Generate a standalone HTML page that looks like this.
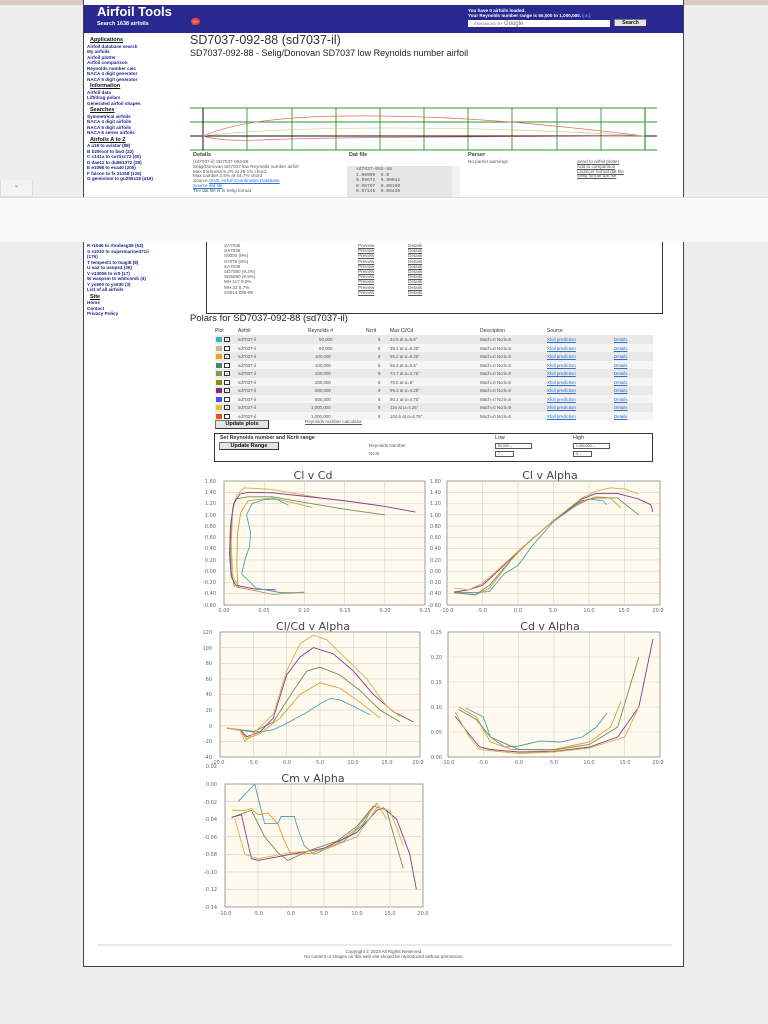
<!DOCTYPE html>
<html><head><meta charset="utf-8">
<style>
*{margin:0;padding:0;box-sizing:border-box}
body{width:768px;height:1024px;background:#eeeeee;position:relative;overflow:hidden;font-family:"Liberation Sans",sans-serif;color:#333}
.a{position:absolute;white-space:nowrap}
#page{position:absolute;left:83px;top:0;width:601px;height:967px;background:#fff;border:1px solid #444;border-top:none}
.nav{position:absolute;left:87px;font-size:4.6px;font-weight:bold;color:#22228a;line-height:5.5px}
.nh{font-size:5.5px;color:#111;text-decoration:underline;font-weight:bold;margin-left:3px}
.lk{color:#2a6fd6;text-decoration:underline}
.sm{font-size:4.6px;color:#555;line-height:4.8px}
.row{position:absolute;left:215px;width:438px;height:8.5px;font-size:4.4px;color:#555}
.row span{position:absolute;top:2px}
.sw{position:absolute;left:1px;top:2px;width:6px;height:5px}
.cb{position:absolute;left:9px;top:2px;width:6px;height:5px;border:0.7px solid #333;background:#fff;font-size:4px;line-height:4px;text-align:center}
.btn{position:absolute;background:#e4e4e4;border:1px solid #777;border-right-color:#333;border-bottom-color:#333;font-size:5.5px;font-weight:bold;color:#111;text-align:center}
.t{font-family:"DejaVu Sans",sans-serif}
</style></head><body>
<div class="a" style="left:0;top:0;width:768px;height:5px;background:#dcc6c6"></div>
<div class="a" style="left:270px;top:-1px;font-size:5px;color:#444">This site uses cookies. See the <span style="color:#22a">privacy policy</span> for more information.</div>
<div id="page"></div>
<div class="a" style="left:84px;top:5px;width:599px;height:28px;background:#282890"></div>
<div class="a" style="left:97px;top:4px;font-size:13px;font-weight:bold;color:#fff">Airfoil Tools</div>
<div class="a" style="left:97px;top:21px;font-size:5.5px;font-weight:bold;color:#fff">Search 1638 airfoils</div>
<div class="a" style="left:191px;top:18px;width:9px;height:7px;border-radius:4px;background:#e0443a;font-size:4px;color:#fff;text-align:center;line-height:7px">G+</div>
<div class="a" style="left:468px;top:8px;font-size:4.6px;font-weight:bold;color:#fff;line-height:5px">You have 0 airfoils loaded.<br>Your Reynolds number range is 50,000 to 1,000,000. <span style="color:#7af">( x )</span></div>
<div class="a" style="left:468px;top:20px;width:142px;height:7px;background:#fff;font-size:4px;color:#777;padding-left:6px;line-height:7px">ENHANCED BY <span style="font-size:6px">Google</span></div>
<div class="btn" style="left:614px;top:19px;width:33px;height:8px;line-height:6px;font-size:5px">Search</div>

<div class="a" style="left:190px;top:33px;font-size:12.5px;color:#333">SD7037-092-88 (sd7037-il)</div>
<div class="a" style="left:190px;top:48px;font-size:9px;color:#222">SD7037-092-88 - Selig/Donovan SD7037 low Reynolds number airfoil</div>

<div class="nav" style="top:38px"><div class="nh">Applications</div>Airfoil database search<br>My airfoils<br>Airfoil plotter<br>Airfoil comparison<br>Reynolds number calc<br>NACA 4 digit generator<br>NACA 5 digit generator
<div class="nh" style="margin-top:2px">Information</div>Airfoil data<br>Lift/drag polars<br>Generated airfoil shapes
<div class="nh" style="margin-top:2px">Searches</div>Symmetrical airfoils<br>NACA 4 digit airfoils<br>NACA 5 digit airfoils<br>NACA 6 series airfoils
<div class="nh" style="margin-top:2px">Airfoils A to Z</div>A a18 to avistar (88)<br>B b29root to bw3 (22)<br>C c141a to curtisc72 (40)<br>D dae11 to du861372 (28)<br>E e1098 to esa40 (205)<br>F falcon to fx 21158 (126)<br>G geminism to gu255118 (419)</div>
<div class="nav" style="top:243px">R r1046 to rhodesg36 (53)<br>S s1010 to supermarine371ii<br>(176)<br>T tempest1 to tsagi8 (8)<br>U ua2 to usnps4 (36)<br>V v13006 to vr9 (17)<br>W waspsm to whitcomb (4)<br>Y ys900 to ys930 (3)<br>List of all airfoils
<div class="nh" style="margin-top:2px">Site</div>Home<br>Contact<br>Privacy Policy</div>

<!-- details -->
<div class="a" style="left:193px;top:152px;font-size:5.5px;font-weight:bold;color:#444">Details</div>
<div class="a" style="left:349px;top:152px;font-size:5.5px;font-weight:bold;color:#444">Dat file</div>
<div class="a" style="left:468px;top:152px;font-size:5.5px;font-weight:bold;color:#444">Parser</div>
<div class="a sm" style="left:193px;top:160px">(sd7037-il) SD7037-092-88<br>Selig/Donovan SD7037 low Reynolds number airfoil<br>Max thickness 9.2% at 26.1% chord.<br>Max camber 2.5% at 44.7% chord<br>Source <span class="lk">UIUC Airfoil Coordinates Database</span><br><span class="lk">Source dat file</span><br>The dat file is in Selig format</div>
<div class="a" style="left:347px;top:166px;width:113px;height:31px;background:#e6e6e6"></div>
<div class="a" style="left:452px;top:166px;width:8px;height:31px;background:#f2f2f2"></div>
<div class="a sm" style="left:356px;top:167px;font-family:'Liberation Mono',monospace;line-height:5.6px">sd7037-092-88<br>1.00000&nbsp; 0.0<br>0.99672&nbsp; 0.00042<br>0.98707&nbsp; 0.00180<br>0.97146&nbsp; 0.00436</div>
<div class="a sm" style="left:468px;top:160px">No parser warnings</div>
<div class="a sm lk" style="left:577px;top:160px">Send to airfoil plotter<br>Add to comparison<br>Lednicer format dat file<br>Selig format dat file</div>

<!-- strip -->
<div class="a" style="left:0;top:197px;width:768px;height:45px;background:#fafafa;border-top:1px solid #ddd"></div>
<div class="a" style="left:0;top:180px;width:33px;height:17px;background:#f4f4f4;border:1px solid #ddd;border-top:none;font-size:7px;color:#777;text-align:center;line-height:12px">⌄</div>

<!-- related box -->
<div class="a" style="left:206px;top:242px;width:457px;height:72px;border:1px solid #333;border-top:none"></div>
<div class="a sm" style="left:224px;top:243px;line-height:5.2px">SA7035<br>SA7036<br>S9000 (9%)<br>S7075 (9%)<br>SA7038<br>SD7080 (9.2%)<br>SD5060 (9.5%)<br>MH 117 9.8%<br>MH 32 8.7%<br>S3014-095-85</div>
<div class="a sm lk" style="left:358px;top:243px;line-height:5.2px">Preview<br>Preview<br>Preview<br>Preview<br>Preview<br>Preview<br>Preview<br>Preview<br>Preview<br>Preview</div>
<div class="a sm lk" style="left:408px;top:243px;line-height:5.2px">Details<br>Details<br>Details<br>Details<br>Details<br>Details<br>Details<br>Details<br>Details<br>Details</div>

<div class="a" style="left:190px;top:313px;font-size:9.5px;color:#222">Polars for SD7037-092-88 (sd7037-il)</div>
<div class="a" style="left:215px;top:328px;font-size:5px;color:#333;width:440px;height:7px">
<span class="a" style="left:0">Plot</span><span class="a" style="left:23px">Airfoil</span><span class="a" style="left:93px">Reynolds #</span><span class="a" style="left:151px">Ncrit</span><span class="a" style="left:175px">Max Cl/Cd</span><span class="a" style="left:265px">Description</span><span class="a" style="left:332px">Source</span></div>

<div class="row" style="top:335px;background:#e9e9e9"><i class="sw" style="background:#38b0c8"></i><i class="cb">✓</i><span style="left:23px">sd7037-il</span><span style="left:104px">50,000</span><span style="left:163px">9</span><span style="left:175px">34.5 at α=6.5°</span><span style="left:265px">Mach=0 Ncrit=9</span><span class="lk" style="left:332px">Xfoil prediction</span><span class="lk" style="left:399px">Details</span></div>
<div class="row" style="top:343.5px;background:#f5f5f5"><i class="sw" style="background:#c8b890"></i><i class="cb"></i><span style="left:23px">sd7037-il</span><span style="left:104px">50,000</span><span style="left:163px">5</span><span style="left:175px">39.1 at α=6.25°</span><span style="left:265px">Mach=0 Ncrit=5</span><span class="lk" style="left:332px">Xfoil prediction</span><span class="lk" style="left:399px">Details</span></div>
<div class="row" style="top:352px;background:#e9e9e9"><i class="sw" style="background:#f0a020"></i><i class="cb">✓</i><span style="left:23px">sd7037-il</span><span style="left:100px">100,000</span><span style="left:163px">9</span><span style="left:175px">55.2 at α=5.25°</span><span style="left:265px">Mach=0 Ncrit=9</span><span class="lk" style="left:332px">Xfoil prediction</span><span class="lk" style="left:399px">Details</span></div>
<div class="row" style="top:360.5px;background:#f5f5f5"><i class="sw" style="background:#3f8a70"></i><i class="cb"></i><span style="left:23px">sd7037-il</span><span style="left:100px">100,000</span><span style="left:163px">5</span><span style="left:175px">55.4 at α=5.5°</span><span style="left:265px">Mach=0 Ncrit=5</span><span class="lk" style="left:332px">Xfoil prediction</span><span class="lk" style="left:399px">Details</span></div>
<div class="row" style="top:369px;background:#e9e9e9"><i class="sw" style="background:#7f9a50"></i><i class="cb">✓</i><span style="left:23px">sd7037-il</span><span style="left:100px">200,000</span><span style="left:163px">9</span><span style="left:175px">74.7 at α=4.75°</span><span style="left:265px">Mach=0 Ncrit=9</span><span class="lk" style="left:332px">Xfoil prediction</span><span class="lk" style="left:399px">Details</span></div>
<div class="row" style="top:377.5px;background:#f5f5f5"><i class="sw" style="background:#8a8a10"></i><i class="cb"></i><span style="left:23px">sd7037-il</span><span style="left:100px">200,000</span><span style="left:163px">5</span><span style="left:175px">70.8 at α=5°</span><span style="left:265px">Mach=0 Ncrit=5</span><span class="lk" style="left:332px">Xfoil prediction</span><span class="lk" style="left:399px">Details</span></div>
<div class="row" style="top:386px;background:#e9e9e9"><i class="sw" style="background:#8a2a7a"></i><i class="cb">✓</i><span style="left:23px">sd7037-il</span><span style="left:100px">500,000</span><span style="left:163px">9</span><span style="left:175px">99.3 at α=4.25°</span><span style="left:265px">Mach=0 Ncrit=9</span><span class="lk" style="left:332px">Xfoil prediction</span><span class="lk" style="left:399px">Details</span></div>
<div class="row" style="top:394.5px;background:#f5f5f5"><i class="sw" style="background:#5050f0"></i><i class="cb"></i><span style="left:23px">sd7037-il</span><span style="left:100px">500,000</span><span style="left:163px">5</span><span style="left:175px">90.1 at α=4.75°</span><span style="left:265px">Mach=0 Ncrit=5</span><span class="lk" style="left:332px">Xfoil prediction</span><span class="lk" style="left:399px">Details</span></div>
<div class="row" style="top:403px;background:#e9e9e9"><i class="sw" style="background:#e0c040"></i><i class="cb">✓</i><span style="left:23px">sd7037-il</span><span style="left:96px">1,000,000</span><span style="left:163px">9</span><span style="left:175px">116 at α=4.25°</span><span style="left:265px">Mach=0 Ncrit=9</span><span class="lk" style="left:332px">Xfoil prediction</span><span class="lk" style="left:399px">Details</span></div>
<div class="row" style="top:411.5px;background:#f5f5f5"><i class="sw" style="background:#f05010"></i><i class="cb"></i><span style="left:23px">sd7037-il</span><span style="left:96px">1,000,000</span><span style="left:163px">5</span><span style="left:175px">104.6 at α=4.75°</span><span style="left:265px">Mach=0 Ncrit=5</span><span class="lk" style="left:332px">Xfoil prediction</span><span class="lk" style="left:399px">Details</span></div>
<div class="btn" style="left:215px;top:420px;width:54px;height:9px;line-height:7px">Update plots</div>
<div class="a sm lk" style="left:305px;top:420px">Reynolds number calculator</div>

<div class="a" style="left:214px;top:433px;width:439px;height:29px;border:1px solid #333"></div>
<div class="a" style="left:220px;top:435px;font-size:5.3px;font-weight:bold;color:#333">Set Reynolds number and Ncrit range</div>
<div class="btn" style="left:219px;top:442px;width:60px;height:8px;line-height:6px">Update Range</div>
<div class="a sm" style="left:369px;top:444px">Reynolds Number</div>
<div class="a sm" style="left:369px;top:452px">NCrit</div>
<div class="a" style="left:495px;top:435px;font-size:5.3px;color:#333">Low</div>
<div class="a" style="left:573px;top:435px;font-size:5.3px;color:#333">High</div>
<div class="a" style="left:495px;top:443px;width:37px;height:6px;border:1px solid #555;font-size:3.5px;line-height:4px;padding-left:2px">50,000 ⌄</div>
<div class="a" style="left:573px;top:443px;width:37px;height:6px;border:1px solid #555;font-size:3.5px;line-height:4px;padding-left:2px">1,000,000 ⌄</div>
<div class="a" style="left:495px;top:451px;width:19px;height:6px;border:1px solid #555;font-size:3.5px;line-height:4px;padding-left:2px">7 ⌄</div>
<div class="a" style="left:573px;top:451px;width:19px;height:6px;border:1px solid #555;font-size:3.5px;line-height:4px;padding-left:2px">9 ⌄</div>

<div class="a" style="left:97px;top:944px;width:575px;height:1.5px;background:#e3ecf2"></div>
<div class="a" style="left:0;width:768px;top:949px;text-align:center;font-size:4.5px;color:#555;line-height:5px">Copyright © 2023 All Rights Reserved.<br>No content or images on this web site should be reproduced without permission.</div>

<svg class="a" style="left:0;top:0" width="768" height="1024" viewBox="0 0 768 1024">
<!-- airfoil plot -->
<g stroke="#2a9a2a" stroke-width="0.9">
<line x1="190" y1="108" x2="657" y2="108"/><line x1="190" y1="122" x2="657" y2="122"/><line x1="190" y1="150" x2="657" y2="150"/>
<line x1="247" y1="108" x2="247" y2="150"/><line x1="292" y1="108" x2="292" y2="150"/><line x1="336" y1="108" x2="336" y2="150"/><line x1="380" y1="108" x2="380" y2="150"/><line x1="424" y1="108" x2="424" y2="150"/><line x1="468" y1="108" x2="468" y2="150"/><line x1="512" y1="108" x2="512" y2="150"/><line x1="557" y1="108" x2="557" y2="150"/><line x1="601" y1="108" x2="601" y2="150"/><line x1="645" y1="108" x2="645" y2="150" stroke-width="1.5" stroke="#5a5"/>
</g>
<line x1="190" y1="136" x2="657" y2="136" stroke="#111" stroke-width="0.9"/>
<line x1="203" y1="108" x2="203" y2="150" stroke="#111" stroke-width="1"/>
<path d="M645,136 C560,126 480,117 380,116 C300,115 240,120 203,136 C215,140 235,141 260,140 C330,137 450,137 645,136" fill="none" stroke="#e06a6a" stroke-width="0.7"/>
<path d="M203,136 C250,130 330,128 390,128 C470,128 560,131 645,136" fill="none" stroke="#c8c070" stroke-width="0.6"/>

<!-- chart titles -->
<g font-family="DejaVu Sans,sans-serif" font-size="11" fill="#444" text-anchor="middle">
<text x="313" y="479">Cl v Cd</text><text x="550" y="479">Cl v Alpha</text>
<text x="313" y="630">Cl/Cd v Alpha</text><text x="550" y="630">Cd v Alpha</text>
<text x="313" y="782">Cm v Alpha</text>
</g>
<!-- plot backgrounds -->
<g fill="#fffaed" stroke="#888" stroke-width="0.8">
<rect x="224" y="481" width="201" height="124"/><rect x="447" y="481" width="213" height="124"/>
<rect x="220" y="632" width="200" height="125"/><rect x="448" y="632" width="212" height="125"/>
<rect x="225" y="784" width="198" height="123"/>
</g>
<g stroke="#d0d0d0" stroke-width="0.6">
<path d="M264.2,481V605M304.4,481V605M344.6,481V605M384.8,481V605M224,492.3H425M224,503.5H425M224,514.8H425M224,526.1H425M224,537.4H425M224,548.6H425M224,559.9H425M224,571.2H425M224,582.5H425M224,593.7H425"/>
<path d="M482.5,481V605M518,481V605M553.5,481V605M589,481V605M624.5,481V605M447,492.3H660M447,503.5H660M447,514.8H660M447,526.1H660M447,537.4H660M447,548.6H660M447,559.9H660M447,571.2H660M447,582.5H660M447,593.7H660"/>
<path d="M253.3,632V757M286.7,632V757M320,632V757M353.3,632V757M386.7,632V757M220,647.6H420M220,663.3H420M220,678.9H420M220,694.5H420M220,710.1H420M220,725.8H420M220,741.4H420"/>
<path d="M483.3,632V757M518.7,632V757M554,632V757M589.3,632V757M624.7,632V757M448,657H660M448,682H660M448,707H660M448,732H660"/>
<path d="M258,784V907M291,784V907M324,784V907M357,784V907M390,784V907M225,801.6H423M225,819.1H423M225,836.7H423M225,854.3H423M225,871.9H423M225,889.4H423"/>
</g>
<!-- axis labels -->
<g font-family="DejaVu Sans,sans-serif" font-size="5" fill="#666" text-anchor="end">
<text x="216" y="483">1.60</text><text x="216" y="494">1.40</text><text x="216" y="505">1.20</text><text x="216" y="517">1.00</text><text x="216" y="528">0.80</text><text x="216" y="539">0.60</text><text x="216" y="550">0.40</text><text x="216" y="562">0.20</text><text x="216" y="573">0.00</text><text x="216" y="584">-0.20</text><text x="216" y="595">-0.40</text><text x="216" y="607">-0.60</text>
<text x="441" y="483">1.60</text><text x="441" y="494">1.40</text><text x="441" y="505">1.20</text><text x="441" y="517">1.00</text><text x="441" y="528">0.80</text><text x="441" y="539">0.60</text><text x="441" y="550">0.40</text><text x="441" y="562">0.20</text><text x="441" y="573">0.00</text><text x="441" y="584">-0.20</text><text x="441" y="595">-0.40</text><text x="441" y="607">-0.60</text>
<text x="212" y="634">120</text><text x="212" y="650">100</text><text x="212" y="665">80</text><text x="212" y="681">60</text><text x="212" y="696">40</text><text x="212" y="712">20</text><text x="212" y="728">0</text><text x="212" y="743">-20</text><text x="212" y="759">-40</text>
<text x="442" y="634">0.25</text><text x="442" y="659">0.20</text><text x="442" y="684">0.15</text><text x="442" y="709">0.10</text><text x="442" y="734">0.05</text><text x="442" y="759">0.00</text>
<text x="217" y="768">0.02</text><text x="217" y="786">0.00</text><text x="217" y="804">-0.02</text><text x="217" y="821">-0.04</text><text x="217" y="839">-0.06</text><text x="217" y="856">-0.08</text><text x="217" y="874">-0.10</text><text x="217" y="891">-0.12</text><text x="217" y="909">-0.14</text>
</g>
<g font-family="DejaVu Sans,sans-serif" font-size="5" fill="#666" text-anchor="middle">
<text x="224" y="612">0.00</text><text x="264" y="612">0.05</text><text x="304" y="612">0.10</text><text x="345" y="612">0.15</text><text x="385" y="612">0.20</text><text x="425" y="612">0.25</text>
<text x="447" y="612">-10.0</text><text x="482" y="612">-5.0</text><text x="518" y="612">0.0</text><text x="553" y="612">5.0</text><text x="589" y="612">10.0</text><text x="624" y="612">15.0</text><text x="658" y="612">20.0</text>
<text x="218" y="764">-10.0</text><text x="253" y="764">-5.0</text><text x="287" y="764">0.0</text><text x="320" y="764">5.0</text><text x="353" y="764">10.0</text><text x="387" y="764">15.0</text><text x="418" y="764">20.0</text>
<text x="448" y="764">-10.0</text><text x="483" y="764">-5.0</text><text x="519" y="764">0.0</text><text x="554" y="764">5.0</text><text x="589" y="764">10.0</text><text x="625" y="764">15.0</text><text x="658" y="764">20.0</text>
<text x="225" y="915">-10.0</text><text x="258" y="915">-5.0</text><text x="291" y="915">0.0</text><text x="324" y="915">5.0</text><text x="357" y="915">10.0</text><text x="390" y="915">15.0</text><text x="423" y="915">20.0</text>
</g>
<!-- curves -->
<g fill="none" stroke-width="0.9">
<g transform="translate(224,571.2) scale(804,-56.36)">
<polyline vector-effect="non-scaling-stroke" stroke="#6f8f5a" points="0.013,-0.28 0.009,0 0.008,0.5 0.010,1.0 0.014,1.28 0.03,1.32 0.06,1.32 0.1,1.22 0.15,1.1 0.2,1.0"/>
<polyline vector-effect="non-scaling-stroke" stroke="#e09a30" points="0.017,-0.28 0.016,0.2 0.017,0.7 0.021,1.05 0.03,1.25 0.06,1.3 0.09,1.2 0.11,1.13"/>
<polyline vector-effect="non-scaling-stroke" stroke="#d4b050" points="0.02,-0.3 0.011,-0.1 0.009,0.5 0.011,1.1 0.016,1.35 0.025,1.48 0.06,1.45 0.1,1.35 0.12,1.3"/>
<polyline vector-effect="non-scaling-stroke" stroke="#8b3a8b" points="0.065,-0.33 0.04,-0.32 0.015,-0.25 0.009,-0.1 0.007,0.3 0.008,0.8 0.012,1.2 0.02,1.37 0.03,1.4 0.06,1.39 0.1,1.33 0.15,1.25 0.2,1.15 0.238,1.05"/>
<polyline vector-effect="non-scaling-stroke" stroke="#4aa3b8" points="0.1,-0.38 0.07,-0.38 0.04,-0.3 0.022,-0.05 0.026,0.2 0.032,0.45 0.033,0.7 0.028,1.0 0.035,1.2 0.05,1.27 0.065,1.28 0.08,1.17"/>
<polyline vector-effect="non-scaling-stroke" stroke="#b89a50" points="0.015,-0.28 0.04,-0.35 0.06,-0.41 0.08,-0.39 0.1,-0.37"/>
</g>
<g transform="translate(518,571.2) scale(7.1,-56.36)">
<polyline vector-effect="non-scaling-stroke" stroke="#4aa3b8" points="-9,-0.37 -6,-0.38 -4,-0.36 -2,-0.05 0,0.1 2,0.45 5,0.88 8,1.15 10,1.28 12,1.25 12.5,1.18"/>
<polyline vector-effect="non-scaling-stroke" stroke="#e09a30" points="-9,-0.37 -6,-0.42 -4,-0.3 -1,0.2 1,0.45 5,0.9 8,1.18 11,1.32 13,1.3 14.5,1.12"/>
<polyline vector-effect="non-scaling-stroke" stroke="#6f8f5a" points="-9,-0.38 -6,-0.42 -4,-0.25 0,0.35 5,0.9 9,1.25 11,1.3 14,1.3 17,1.0"/>
<polyline vector-effect="non-scaling-stroke" stroke="#8b3a8b" points="-9,-0.37 -7,-0.33 -5,-0.25 -2,0.1 0,0.35 5,0.9 9,1.28 11,1.38 14,1.38 17,1.28 18.7,1.18 19,1.05"/>
<polyline vector-effect="non-scaling-stroke" stroke="#d4b050" points="-9,-0.3 -7,-0.33 -5,-0.22 0,0.35 5,0.9 9,1.3 11,1.42 13,1.48 15,1.46 17,1.37"/>
</g>
<g transform="translate(286.7,725.75) scale(6.667,-0.78125)">
<polyline vector-effect="non-scaling-stroke" stroke="#4aa3b8" points="-9,-3 -4,-8 -2,-5 0,3 3,17 5,28 6.5,35 8,33 10,25 12.5,14"/>
<polyline vector-effect="non-scaling-stroke" stroke="#e09a30" points="-9,-3 -7,-6 -6,-17 -4,-10 -1,10 2,40 5,55 8,48 11,30 14,10"/>
<polyline vector-effect="non-scaling-stroke" stroke="#6f8f5a" points="-9,-3 -5,-8 -2,5 1,45 3,70 5,75 8,65 11,45 14,20 17,5"/>
<polyline vector-effect="non-scaling-stroke" stroke="#8b3a8b" points="-9,-3 -7,-5 -6,-14 -4,-8 -2,10 0,65 2,88 4,100 7,92 10,70 13,40 16,18 19,5"/>
<polyline vector-effect="non-scaling-stroke" stroke="#d4b050" points="-9,-3 -7,-5 -6.3,-20 -5,-10 -2,15 0,70 2,105 4,116 6,110 9,85 12,60 15,25 17,12"/>
</g>
<g transform="translate(518.7,757) scale(7.067,-500)">
<polyline vector-effect="non-scaling-stroke" stroke="#4aa3b8" points="-7.5,0.098 -5,0.08 -4,0.04 -2,0.02 0,0.022 3,0.032 6,0.03 9,0.04 11,0.06 12.5,0.088"/>
<polyline vector-effect="non-scaling-stroke" stroke="#e09a30" points="-8.5,0.1 -6,0.08 -4,0.03 -1,0.015 5,0.015 10,0.03 13,0.06 14.5,0.112"/>
<polyline vector-effect="non-scaling-stroke" stroke="#6f8f5a" points="-8.5,0.095 -6,0.075 -4,0.04 0,0.015 5,0.014 10,0.025 14,0.06 17,0.2"/>
<polyline vector-effect="non-scaling-stroke" stroke="#8b3a8b" points="-9,0.082 -7,0.045 -5.5,0.02 -4,0.015 0,0.01 5,0.011 10,0.02 14,0.04 17,0.1 19,0.236"/>
<polyline vector-effect="non-scaling-stroke" stroke="#d4b050" points="-9,0.09 -7,0.04 -5.5,0.015 0,0.007 5,0.01 10,0.018 15,0.04 17,0.1"/>
</g>
<g transform="translate(291,784) scale(6.6,-878.6)">
<polyline vector-effect="non-scaling-stroke" stroke="#4aa3b8" points="-8,-0.02 -5.5,0 -4.5,-0.03 -4,-0.045 -2,-0.045 -1.5,-0.037 0.5,-0.037 1,-0.05 2,-0.07 3.5,-0.08 5,-0.075 8,-0.065 11,-0.045 12.5,-0.025"/>
<polyline vector-effect="non-scaling-stroke" stroke="#e09a30" points="-9,-0.03 -7,-0.03 -6,-0.028 -5,-0.035 -3.5,-0.033 -2,-0.045 -1,-0.065 0,-0.08 3,-0.079 7,-0.068 10,-0.05 13,-0.022 14.5,-0.04"/>
<polyline vector-effect="non-scaling-stroke" stroke="#6f8f5a" points="-9,-0.038 -6,-0.03 -4,-0.06 -2,-0.078 -0.5,-0.087 3,-0.075 7,-0.065 10,-0.048 12.5,-0.025 14.5,-0.03 16,-0.07 17,-0.096"/>
<polyline vector-effect="non-scaling-stroke" stroke="#8b3a8b" points="-9,-0.038 -7.5,-0.035 -6,-0.085 -5,-0.087 0,-0.08 5,-0.073 10,-0.055 13,-0.03 14,-0.027 16,-0.04 18,-0.08 19,-0.12"/>
<polyline vector-effect="non-scaling-stroke" stroke="#d4b050" points="-8.5,-0.04 -7,-0.08 -5,-0.085 0,-0.078 5,-0.075 10,-0.06 13,-0.027 15,-0.03 17,-0.07"/>
</g>
</g>
</svg>
</body></html>
